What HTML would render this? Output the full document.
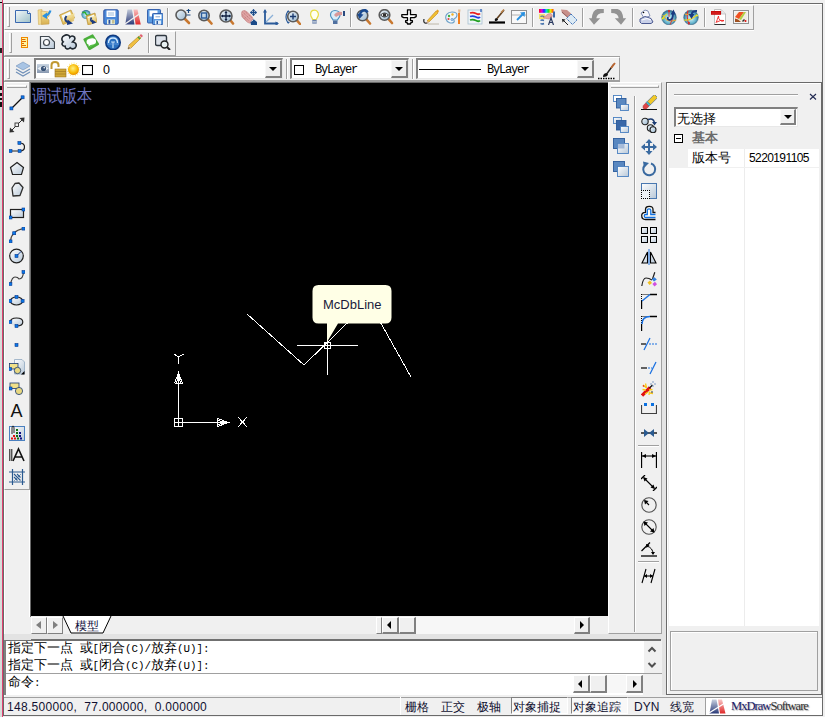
<!DOCTYPE html>
<html><head><meta charset="utf-8">
<style>
*{box-sizing:border-box;margin:0;padding:0}
html,body{width:825px;height:717px;overflow:hidden;background:#f0f0f0;font-family:"Liberation Sans",sans-serif;font-size:12px;color:#000}
.a{position:absolute}
.tb{position:absolute;background:#f0f0f0;border-top:1px solid #fff;border-left:1px solid #fff;border-right:1px solid #a0a0a0;border-bottom:1px solid #a0a0a0}
.gripv{position:absolute;width:3px;border-left:1px solid #fff;border-right:1px solid #a0a0a0;border-bottom:1px solid #a0a0a0}
.griph{position:absolute;height:3px;border-top:1px solid #fff;border-bottom:1px solid #a0a0a0;border-right:1px solid #a0a0a0}
.sepv{position:absolute;width:2px;border-left:1px solid #a0a0a0;border-right:1px solid #fff}
.seph{position:absolute;height:2px;border-top:1px solid #a0a0a0;border-bottom:1px solid #fff}
.ic{position:absolute;width:16px;height:16px}
.combo{position:absolute;background:#fff;border-top:2px solid #808080;border-left:2px solid #808080;border-right:1px solid #e8e8e8;border-bottom:1px solid #e8e8e8}
.ddb{position:absolute;background:#f0f0f0;border-top:1px solid #f8f8f8;border-left:1px solid #f8f8f8;border-right:2px solid #808080;border-bottom:2px solid #808080}
.ddb:after{content:"";position:absolute;left:50%;top:50%;margin-left:-4px;margin-top:-2px;border-left:4px solid transparent;border-right:4px solid transparent;border-top:4px solid #000}
.sb{position:absolute;background:#f0f0f0;border-top:1px solid #fff;border-left:1px solid #fff;border-right:1px solid #808080;border-bottom:1px solid #808080}
.m{font-family:"Liberation Mono",monospace;font-size:10.83px}
.cjk{font-family:"Liberation Sans",sans-serif}
</style></head><body>
<!-- left edge -->
<div class="a" style="left:0;top:0;width:2px;height:717px;background:#d8dcda"></div>
<div class="a" style="left:2px;top:0;width:1px;height:717px;background:#e04070"></div>
<!-- app frame -->

<div class="a" style="left:4px;top:4px;width:818px;height:1px;background:#fff"></div>
<div class="a" style="left:4px;top:4px;width:1px;height:711px;background:#fff"></div>

<!-- row separators -->
<div class="a" style="left:4px;top:29px;width:750px;height:1px;background:#a0a0a0"></div>
<div class="a" style="left:4px;top:30px;width:750px;height:1px;background:#fff"></div>
<div class="a" style="left:4px;top:56px;width:616px;height:1px;background:#a0a0a0"></div>
<div class="a" style="left:4px;top:57px;width:616px;height:1px;background:#fff"></div>
<div class="a" style="left:4px;top:81px;width:616px;height:1px;background:#a0a0a0"></div>

<!-- toolbar row1 -->
<div class="tb" style="left:4px;top:5px;width:750px;height:25px"></div>
<div class="gripv" style="left:7px;top:7px;height:20px"></div>
<!-- toolbar row2 -->
<div class="tb" style="left:4px;top:31px;width:172px;height:25px"></div>
<div class="gripv" style="left:9px;top:33px;height:20px"></div>
<!-- toolbar row3 -->
<div class="tb" style="left:4px;top:57px;width:616px;height:24px"></div>
<div class="gripv" style="left:7px;top:59px;height:20px"></div>

<!-- row1 separators -->
<div class="sepv" style="left:167px;top:8px;height:19px"></div>
<div class="sepv" style="left:350px;top:8px;height:19px"></div>
<div class="sepv" style="left:532px;top:8px;height:19px"></div>
<div class="sepv" style="left:582px;top:8px;height:19px"></div>
<div class="sepv" style="left:632px;top:8px;height:19px"></div>
<div class="sepv" style="left:704px;top:8px;height:19px"></div>
<div class="sepv" style="left:148px;top:33px;height:20px"></div>
<!-- layer combos -->
<div class="combo" style="left:34px;top:58px;width:249px;height:21px"></div>
<div class="ddb" style="left:265px;top:60px;width:17px;height:18px"></div>
<div class="a" style="left:103px;top:62px;font-size:12.5px;line-height:16px">0</div>
<div class="sepv" style="left:286px;top:59px;height:20px"></div>
<div class="combo" style="left:290px;top:58px;width:119px;height:21px"></div>
<div class="ddb" style="left:391px;top:60px;width:17px;height:18px"></div>
<div class="a" style="left:315px;top:62px;font-family:'Liberation Mono',monospace;font-size:12px;line-height:16px;letter-spacing:-1.2px">ByLayer</div>
<div class="sepv" style="left:412px;top:59px;height:20px"></div>
<div class="combo" style="left:416px;top:58px;width:178px;height:21px"></div>
<div class="ddb" style="left:577px;top:60px;width:17px;height:18px"></div>
<div class="a" style="left:419px;top:69px;width:62px;height:1px;background:#000"></div>
<div class="a" style="left:487px;top:62px;font-family:'Liberation Mono',monospace;font-size:12px;line-height:16px;letter-spacing:-1.2px">ByLayer</div>
<!-- left vertical toolbar -->
<div class="tb" style="left:4px;top:82px;width:26px;height:408px"></div>
<div class="griph" style="left:7px;top:85px;width:20px"></div>

<!-- canvas -->
<div class="a" style="left:29px;top:81px;width:580px;height:536px;border-left:1px solid #a0a0a0;border-top:1px solid #a0a0a0"></div><div class="a" style="left:30px;top:82px;width:579px;height:535px;border-left:1px solid #696969;border-top:1px solid #696969"></div><div class="a" style="left:29px;top:490px;width:1px;height:127px;background:#fff"></div>
<div class="a" id="cv" style="left:31px;top:83px;width:577px;height:533px;background:#000;overflow:hidden">
<svg width="577" height="533" style="position:absolute;left:0;top:0" shape-rendering="crispEdges">
<g transform="translate(-31,-83)" stroke="#fff" stroke-width="1" fill="none">
<polyline points="247,314 304,365 369,302 411,377"/>
<line x1="297" y1="345.5" x2="358" y2="345.5"/>
<line x1="327.5" y1="315" x2="327.5" y2="375"/>
<rect x="324.5" y="342.5" width="6" height="6"/>
<rect x="174.5" y="418.5" width="8" height="8"/>
<line x1="178.5" y1="418" x2="178.5" y2="427"/>
<line x1="174" y1="422.5" x2="183" y2="422.5"/>
<line x1="178.5" y1="418" x2="178.5" y2="374"/>
<line x1="183" y1="422.5" x2="227" y2="422.5"/>
<polyline points="174.5,383.5 178.5,372.5 182.5,383.5 174.5,383.5"/>
<polyline points="176.5,383 178.5,375 180.5,383"/>
<polyline points="217.5,418.5 228.5,422.5 217.5,426.5 217.5,418.5"/>
<polyline points="218,420.5 226,422.5 218,424.5"/>
<line x1="238" y1="417" x2="247" y2="427"/>
<line x1="247" y1="417" x2="238" y2="427"/>
<polyline points="174,354 178.5,357 184,354"/>
<line x1="178.5" y1="357" x2="178.5" y2="364"/>
</g>
<g transform="translate(-31,-83)">
<path d="M318.5,285 H385.5 Q391.5,285 391.5,291 V317.5 Q391.5,323.5 385.5,323.5 H338 L327,342 L327,323.5 H318.5 Q312.5,323.5 312.5,317.5 V291 Q312.5,285 318.5,285 Z" fill="#ffffe6" stroke="none" shape-rendering="geometricPrecision"/>
</g>
</svg>
<div class="a" style="left:292px;top:214px;font-size:13px;color:#1a1a3a;letter-spacing:0px">McDbLine</div>
<div class="a" style="left:1px;top:2px;font-size:15px;line-height:17px;color:#6e74c0;font-weight:200;transform:scaleY(1.18);transform-origin:0 0">调试版本</div>
</div>

<!-- tab/scroll bar -->
<div class="a" style="left:31px;top:616px;width:577px;height:18px;background:#f0f0f0"></div>
<div class="sb" style="left:31px;top:617px;width:16px;height:17px"></div>
<div class="sb" style="left:47px;top:617px;width:16px;height:17px"></div>
<div class="a" style="left:36px;top:621px;width:0;height:0;border-top:4px solid transparent;border-bottom:4px solid transparent;border-right:5px solid #808080"></div>
<div class="a" style="left:53px;top:621px;width:0;height:0;border-top:4px solid transparent;border-bottom:4px solid transparent;border-left:5px solid #808080"></div>
<svg class="a" style="left:62px;top:616px" width="52" height="18"><path d="M1,0 L9,17 H41 L49,0" fill="#fff" stroke="#000" stroke-width="1"/></svg>
<div class="a" style="left:75px;top:618px;font-size:12px;color:#101040">模型</div>
<div class="sb" style="left:376px;top:617px;width:6px;height:17px"></div>
<div class="sb" style="left:382px;top:617px;width:17px;height:17px;border-right:2px solid #808080;border-bottom:2px solid #808080"></div>
<div class="a" style="left:387px;top:621px;width:0;height:0;border-top:4px solid transparent;border-bottom:4px solid transparent;border-right:4px solid #000"></div>
<div class="sb" style="left:399px;top:617px;width:17px;height:17px;border-right:2px solid #808080;border-bottom:2px solid #808080"></div>
<div class="a" style="left:416px;top:617px;width:158px;height:17px;background:#f7f7f7"></div>
<div class="sb" style="left:574px;top:617px;width:16px;height:17px;border-right:2px solid #808080;border-bottom:2px solid #808080"></div>
<div class="a" style="left:580px;top:621px;width:0;height:0;border-top:4px solid transparent;border-bottom:4px solid transparent;border-left:4px solid #000"></div>
<div class="a" style="left:31px;top:634px;width:631px;height:6px;background:#e3e3e3"></div>

<!-- right toolbar -->
<div class="tb" style="left:608px;top:82px;width:54px;height:552px"></div>
<div class="griph" style="left:611px;top:85px;width:48px"></div>
<div class="sepv" style="left:634px;top:96px;height:536px"></div>
<!-- right toolbar seps -->
<div class="seph" style="left:638px;top:445px;width:21px"></div>
<div class="seph" style="left:638px;top:561px;width:21px"></div>


<!-- splitter -->
<div class="a" style="left:662px;top:82px;width:4px;height:613px;background:#e3e3e3"></div>

<!-- right panel -->
<div class="a" style="left:666px;top:82px;width:156px;height:613px;border:1px solid #6a6a6a;background:#f0f0f0"></div>
<div class="a" style="left:667px;top:83px;width:1px;height:611px;background:#fff"></div>
<div class="a" style="left:667px;top:83px;width:154px;height:1px;background:#fff"></div>
<div class="a" style="left:674px;top:94px;width:124px;height:2px;border-top:1px solid #a0a0a0;border-bottom:1px solid #fff"></div>
<svg class="a" style="left:809px;top:93px" width="8" height="7"><path d="M1,1 L7,6.5 M7,1 L1,6.5" stroke="#202850" stroke-width="1.1"/></svg>
<div class="combo" style="left:674px;top:107px;width:124px;height:20px"></div>
<div class="ddb" style="left:780px;top:109px;width:16px;height:16px"></div>
<div class="a cjk" style="left:677px;top:110.5px;font-size:13px;line-height:16px">无选择</div>
<div class="a" style="left:674px;top:134px;width:9px;height:9px;border:1px solid #000;background:#fff"></div>
<div class="a" style="left:676px;top:138px;width:5px;height:1px;background:#000"></div>
<div class="a cjk" style="left:692px;top:130px;font-size:13px;line-height:16px;color:#6a6a6a;font-weight:bold">基本</div>
<div class="a" style="left:688px;top:149px;width:131px;height:18px;background:#fff"></div>
<div class="a" style="left:669px;top:168px;width:150px;height:458px;background:#fff"></div>
<div class="a" style="left:744px;top:149px;width:1px;height:477px;background:#ececec"></div>
<div class="a" style="left:669px;top:167px;width:150px;height:1px;background:#f0f0f0"></div>
<div class="a cjk" style="left:692px;top:150px;font-size:13px;line-height:16px">版本号</div>
<div class="a" style="left:749px;top:150px;font-size:12px;line-height:16px;letter-spacing:-0.6px">5220191105</div>
<div class="a" style="left:670px;top:631px;width:148px;height:60px;border:1px solid #a0a0a0;box-shadow:inset 1px 1px 0 #fff"></div>

<!-- command area -->
<div class="a" style="left:4px;top:639px;width:657px;height:56px;border-top:2px solid #707070;border-left:2px solid #808080;background:#fff"></div>
<div class="a" style="left:4px;top:634px;width:27px;height:6px;background:#e3e3e3"></div>
<div class="a cjk" style="left:8px;top:640px;font-size:13px;line-height:16px;white-space:pre">指定下一点<span class="m"> </span>或<span class="m">[</span>闭合<span class="m">(C)/</span>放弃<span class="m">(U)]:</span><br>指定下一点<span class="m"> </span>或<span class="m">[</span>闭合<span class="m">(C)/</span>放弃<span class="m">(U)]:</span></div>
<div class="a" style="left:6px;top:673px;width:656px;height:1px;background:#a0a0a0"></div>
<div class="a cjk" style="left:8px;top:674px;font-size:13px;line-height:16px;white-space:pre">命令<span class="m">:</span></div>
<div class="a" style="left:644px;top:641px;width:18px;height:32px;background:#f0f0f0"></div>
<svg class="a" style="left:644px;top:641px" width="18" height="32"><path d="M4.5,10.5 L8,7 L11.5,10.5 M4.5,22 L8,25.5 L11.5,22" fill="none" stroke="#505050" stroke-width="2"/></svg>
<div class="sb" style="left:573px;top:675px;width:17px;height:18px;border-right:2px solid #808080;border-bottom:2px solid #808080"></div>
<div class="a" style="left:578px;top:680px;width:0;height:0;border-top:4px solid transparent;border-bottom:4px solid transparent;border-right:4px solid #000"></div>
<div class="sb" style="left:590px;top:675px;width:17px;height:18px;border-right:2px solid #808080;border-bottom:2px solid #808080"></div>
<div class="a" style="left:607px;top:675px;width:19px;height:18px;background:#f7f7f7"></div>
<div class="sb" style="left:626px;top:675px;width:17px;height:18px;border-right:2px solid #808080;border-bottom:2px solid #808080"></div>
<div class="a" style="left:633px;top:680px;width:0;height:0;border-top:4px solid transparent;border-bottom:4px solid transparent;border-left:4px solid #000"></div>
<div class="a" style="left:643px;top:674px;width:19px;height:21px;background:#f0f0f0"></div>

<!-- status bar -->
<div class="a" style="left:4px;top:697px;width:818px;height:19px;border-top:1px solid #a0a0a0;border-bottom:1px solid #fff;background:#f0f0f0"></div>
<div class="a" style="left:400px;top:697px;width:1px;height:18px;background:#fff"></div>
<div class="a" style="left:7px;top:699px;font-size:12px;line-height:16px;color:#101030;white-space:pre;letter-spacing:0.3px">148.500000,  77.000000,  0.000000</div>
<div class="a cjk" style="left:405px;top:699px;font-size:12px;line-height:16px;color:#101030">栅格</div>
<div class="a cjk" style="left:441px;top:699px;font-size:12px;line-height:16px;color:#101030">正交</div>
<div class="a cjk" style="left:477px;top:699px;font-size:12px;line-height:16px;color:#101030">极轴</div>
<div class="a" style="left:511px;top:697px;width:57px;height:17px;border-top:1px solid #808080;border-left:1px solid #808080;border-right:1px solid #fff;border-bottom:1px solid #fff;background:#f8f8f8"></div>
<div class="a cjk" style="left:513px;top:699px;font-size:12px;line-height:16px;color:#101030">对象捕捉</div>
<div class="a" style="left:571px;top:697px;width:57px;height:17px;border-top:1px solid #808080;border-left:1px solid #808080;border-right:1px solid #fff;border-bottom:1px solid #fff;background:#f8f8f8"></div>
<div class="a cjk" style="left:573px;top:699px;font-size:12px;line-height:16px;color:#101030">对象追踪</div>
<div class="a" style="left:634px;top:699px;font-size:12px;line-height:16px;color:#101030">DYN</div>
<div class="a cjk" style="left:670px;top:699px;font-size:12px;line-height:16px;color:#101030">线宽</div>
<div class="a" style="left:705px;top:697px;width:117px;height:18px;border-top:1px solid #909090;border-left:1px solid #a0a0a0;background:#fff"></div>
<svg class="a" style="left:709px;top:699px" width="18" height="15"><defs><linearGradient id="sL" x1="0" y1="0" x2="0" y2="1"><stop offset="0" stop-color="#c8d0e0"/><stop offset="1" stop-color="#2a3a78"/></linearGradient><linearGradient id="sR" x1="0" y1="0" x2="0" y2="1"><stop offset="0" stop-color="#f8c8c8"/><stop offset="1" stop-color="#e02828"/></linearGradient></defs><path d="M3,0.5 H7.5 L10,14.5 H0.5 Z" fill="url(#sL)"/><path d="M9,0.5 H13 L16.5,14.5 H11 Z" fill="url(#sR)"/><path d="M0,14 L16,4" stroke="#fff" stroke-width="1.4"/></svg>
<div class="a" style="left:731px;top:699px;font-family:'Liberation Serif',serif;font-size:12.5px;line-height:14px;letter-spacing:-0.95px;font-weight:normal;text-shadow:1px 1px 1px #aaa"><span style="color:#20206a">MxDraw</span><span style="color:#333">Software</span></div>
<svg width="0" height="0" style="position:absolute"><defs>
<linearGradient id="gPage" x1="0" y1="0" x2="1" y2="1"><stop offset="0" stop-color="#f4f8fa"/><stop offset="1" stop-color="#9cc0c8"/></linearGradient>
<linearGradient id="gFold" x1="0" y1="0" x2="0" y2="1"><stop offset="0" stop-color="#f8e6a0"/><stop offset="1" stop-color="#d8b050"/></linearGradient>
<linearGradient id="gLens" x1="0" y1="0" x2="1" y2="1"><stop offset="0" stop-color="#f0f6fa"/><stop offset="1" stop-color="#9ab8d0"/></linearGradient>
<linearGradient id="gGrey" x1="0" y1="0" x2="1" y2="1"><stop offset="0" stop-color="#ffffff"/><stop offset="1" stop-color="#b8c8d8"/></linearGradient>
<linearGradient id="gBlue" x1="0" y1="0" x2="1" y2="1"><stop offset="0" stop-color="#80a8d8"/><stop offset="1" stop-color="#3a6aa8"/></linearGradient>
<linearGradient id="gMxL" x1="0" y1="0" x2="0" y2="1"><stop offset="0" stop-color="#c0c8d8"/><stop offset="1" stop-color="#2a3a78"/></linearGradient>
<linearGradient id="gMxR" x1="0" y1="0" x2="0" y2="1"><stop offset="0" stop-color="#f8c0c0"/><stop offset="1" stop-color="#e02828"/></linearGradient>
<radialGradient id="gGlobe" cx="0.5" cy="0.55" r="0.6"><stop offset="0" stop-color="#e0f6fa"/><stop offset="0.55" stop-color="#6ab8d0"/><stop offset="1" stop-color="#1a5078"/></radialGradient>
<linearGradient id="gRain" x1="0" y1="0" x2="1" y2="0"><stop offset="0" stop-color="#ff0020"/><stop offset="0.2" stop-color="#e000e0"/><stop offset="0.35" stop-color="#2020ff"/><stop offset="0.5" stop-color="#00e0e0"/><stop offset="0.65" stop-color="#20e020"/><stop offset="0.8" stop-color="#f0f000"/><stop offset="1" stop-color="#ff3000"/></linearGradient>
<radialGradient id="gSun" cx="0.45" cy="0.4" r="0.6"><stop offset="0" stop-color="#fff080"/><stop offset="0.7" stop-color="#f8b800"/><stop offset="1" stop-color="#e89000"/></radialGradient>
</defs></svg>
<svg class="a" style="left:15px;top:9px" width="16" height="16" viewBox="0 0 16 16"><path d="M0.5,1.5 H12.5 L15.5,4.5 V13.5 H0.5 Z" fill="url(#gPage)" stroke="#3a68b0" stroke-width="1"/><path d="M12.5,1.5 V4.5 H15.5" fill="#fff" stroke="#3a68b0"/></svg>
<svg class="a" style="left:37px;top:9px" width="16" height="16" viewBox="0 0 16 16"><path d="M1,1 L5,0.5 L5.5,15 L1.5,15.5 Z" fill="#f4dc90" stroke="#d0b060" stroke-width="0.6"/><path d="M4,2 L12,3 L12,7 L10,9 L12,11 V15 L4.5,15.5 Z" fill="url(#gFold)" stroke="#c8a050" stroke-width="0.6"/><path d="M8.5,6.5 Q12,6 13.5,1.5" stroke="#2a90e0" stroke-width="2.2" fill="none"/><path d="M5,7 L10,3.5 L10,10 Z" fill="#2a90e0"/></svg>
<svg class="a" style="left:59px;top:9px" width="16" height="16" viewBox="0 0 16 16"><path d="M0.5,6 L12,1 L15.5,9 L4,15.5 Z" fill="#e8c460" stroke="#b89038" stroke-width="0.7"/><path d="M2.5,6.5 L11,2.5 L13,8 L5,13 Z" fill="#f4fbff"/><path d="M5,8 L15.5,4 L15,12 L5,15.5 Z" fill="url(#gFold)" opacity="0.9"/><path d="M7.5,7 Q4.5,11 9,13.5" stroke="#1a3a80" stroke-width="2" fill="none"/><path d="M8.5,10.5 L14,14.5 L8,16 Z" fill="#1a3a80"/></svg>
<svg class="a" style="left:81px;top:9px" width="16" height="16" viewBox="0 0 16 16"><circle cx="5" cy="5.5" r="4.6" fill="url(#gGlobe)"/><path d="M1.5,4 Q4,2 5,5 Q6,7 9,6" stroke="#30b030" stroke-width="1.6" fill="none"/><path d="M5,7 L14,4 L16,13 L7,16 Z" fill="#e0b850" stroke="#b08830" stroke-width="0.6"/><path d="M6.5,8 L13,5.5 L14.5,11 L8,14 Z" fill="#f4fbff"/><path d="M7,9 L15,6.5 L15.5,13 L8,16 Z" fill="url(#gFold)" opacity="0.85"/><path d="M10.5,8.5 Q8.5,12 12,13" stroke="#1a3a80" stroke-width="1.6" fill="none"/><path d="M11,10.5 L15.5,13.5 L11,15 Z" fill="#1a3a80"/></svg>
<svg class="a" style="left:103px;top:9px" width="16" height="16" viewBox="0 0 16 16"><rect x="0.8" y="0.8" width="14.4" height="14.4" rx="1.2" fill="#4a88d8" stroke="#2a50a0" stroke-width="1"/><rect x="3.5" y="1.5" width="9" height="6.5" fill="#fff"/><path d="M5,4 H11 M5,6 H11" stroke="#80a8d0" stroke-width="0.8"/><rect x="4" y="10.5" width="8" height="4.7" fill="#e8f0e0"/><rect x="5.5" y="11" width="1.8" height="3.8" fill="#2a50a0"/><rect x="9" y="11" width="2.5" height="3.5" fill="#c8c090"/></svg>
<svg class="a" style="left:125px;top:9px" width="16" height="16" viewBox="0 0 16 16"><path d="M2.5,0.5 H7 L9.5,15.5 H0.3 Z" fill="url(#gMxL)"/><path d="M8.5,0.5 H12.5 L15.8,15.5 H10.6 Z" fill="url(#gMxR)"/><path d="M0,15 L15,4.5" stroke="#f0f0f0" stroke-width="1.4"/></svg>
<svg class="a" style="left:147px;top:9px" width="16" height="16" viewBox="0 0 16 16"><rect x="0.5" y="0.5" width="13" height="13.5" rx="0.8" fill="#5a9ae0" stroke="#2a58a8" stroke-width="0.9"/><rect x="2.5" y="1.5" width="8" height="6" fill="#fff"/><rect x="5.5" y="4.5" width="10.5" height="11" rx="0.8" fill="#5a9ae0" stroke="#2a58a8" stroke-width="0.9"/><rect x="7" y="5.5" width="7.5" height="4.5" fill="#fff"/><path d="M8.5,7.8 H13" stroke="#6a90c0" stroke-width="0.8"/><rect x="8" y="11.5" width="6" height="4" fill="#e0ecf8"/><rect x="9.5" y="12" width="1.5" height="3" fill="#2a58a0"/></svg>
<svg class="a" style="left:175px;top:9px" width="16" height="16" viewBox="0 0 16 16"><path d="M9.5,9.5 L14,14" stroke="#c87830" stroke-width="2.6" stroke-linecap="round"/><circle cx="6" cy="6" r="5" fill="url(#gLens)" stroke="#5a5a5a" stroke-width="1.6"/><path d="M11.5,1.5 H15.5 M13.5,0 V4 M11.5,6 H15.5" stroke="#1a4a80" stroke-width="1.2"/></svg>
<svg class="a" style="left:197px;top:9px" width="16" height="16" viewBox="0 0 16 16"><path d="M10.6,10.1 L14.5,14.5" stroke="#c87830" stroke-width="2.6" stroke-linecap="round"/><circle cx="7" cy="6.5" r="5.2" fill="url(#gLens)" stroke="#5a5a5a" stroke-width="1.6"/><rect x="4.5" y="4" width="5" height="5" fill="none" stroke="#2a5a9a" stroke-width="1.4"/></svg>
<svg class="a" style="left:219px;top:9px" width="16" height="16" viewBox="0 0 16 16"><path d="M11.2,11.2 L14,14.5" stroke="#c87830" stroke-width="2.6" stroke-linecap="round"/><circle cx="7" cy="7" r="6" fill="url(#gLens)" stroke="#5a5a5a" stroke-width="1.6"/><path d="M7,2.5 V11.5 M2.5,7 H11.5" stroke="#102040" stroke-width="1.3"/><path d="M7,2 L5.5,4 H8.5 Z M7,12 L5.5,10 H8.5 Z M2,7 L4,5.5 V8.5 Z M12,7 L10,5.5 V8.5 Z" fill="#102040"/></svg>
<svg class="a" style="left:241px;top:9px" width="16" height="16" viewBox="0 0 16 16"><path d="M0.5,4 Q0.5,1.5 3,1.5 Q4.5,1.5 6,2.8 L10.5,7 Q12.8,9.2 12,11.8 L10.5,13.8 Q8,14.8 6,13 L1.2,8 Q0.3,6 0.5,4 Z" fill="#e0a4a4" stroke="#c08080" stroke-width="0.5"/><path d="M1.5,3 L9,10 M1,5.5 L7.5,11.5 M3.5,2 L10.5,8.5 M1.2,7.5 L5.5,12" stroke="#b06c6c" stroke-width="0.8" stroke-dasharray="1.2 0.9"/><path d="M9.5,13 L12.5,10 L16,13 V16 H10 Z" fill="#1a4a88"/><path d="M10.5,12.5 L12.5,10.5" stroke="#f0f0f0" stroke-width="0.8"/><path d="M12.5,0.5 V6.5 M9.5,3.5 H15.5" stroke="#1a4a88" stroke-width="1.3"/><path d="M12.5,0 L10.8,2 H14.2 Z M12.5,7 L10.8,5 H14.2 Z M9,3.5 L11,1.8 V5.2 Z M16,3.5 L14,1.8 V5.2 Z" fill="#1a4a88"/></svg>
<svg class="a" style="left:263px;top:9px" width="16" height="16" viewBox="0 0 16 16"><path d="M2,1.5 V14.5 H15" stroke="#2a5a9a" stroke-width="1.8" fill="none"/><path d="M2,0 L0,3.5 H4 Z M16,14.5 L12.5,12.5 V16.5 Z" fill="#2a5a9a"/><path d="M3,13 L10,6" stroke="#8ab0d8" stroke-width="1.2"/></svg>
<svg class="a" style="left:285px;top:9px" width="16" height="16" viewBox="0 0 16 16"><path d="M3,2 Q-1,8 3,14" stroke="#2a5a9a" stroke-width="1.2" fill="none"/><path d="M3,1 L5,3 L2.5,3.5 Z M3,15 L5,13 L2.5,12.5 Z" fill="#2a5a9a"/><path d="M11.7,11.2 L15,15" stroke="#c87830" stroke-width="2.6" stroke-linecap="round"/><circle cx="8" cy="7.5" r="5.3" fill="url(#gLens)" stroke="#5a5a5a" stroke-width="1.6"/><path d="M8,4.5 V10.5 M5,7.5 H11" stroke="#1a3a70" stroke-width="1.4"/></svg>
<svg class="a" style="left:307px;top:9px" width="16" height="16" viewBox="0 0 16 16"><path d="M7.5,1.2 C4.8,1.2 3.6,3.3 3.6,5.4 C3.6,7.8 5.3,8.8 5.6,10.5 H9.4 C9.7,8.8 11.4,7.8 11.4,5.4 C11.4,3.3 10.2,1.2 7.5,1.2 Z" fill="#fffff0" stroke="#e8dc40" stroke-width="1.2"/><rect x="5.3" y="10.8" width="4.4" height="4" rx="0.6" fill="#6a80a8"/><path d="M5.5,12.5 H9.5 M5.5,13.8 H9.5" stroke="#e0e8f0" stroke-width="0.6"/></svg>
<svg class="a" style="left:329px;top:9px" width="16" height="16" viewBox="0 0 16 16"><path d="M6,1.5 C3,1.5 1.5,4 1.5,6 C1.5,8.5 3.5,9.5 4,11 H8.5 C9,9.5 11,8.5 11,6 C11,4 9.5,1.5 6,1.5 Z" fill="#d8ecf8" stroke="#4a90c0" stroke-width="1.2"/><rect x="4" y="11.5" width="4.5" height="3.5" fill="#5070a0"/><path d="M5,6 Q8,2 13,3 L13,6 Q9,6 7,8 Z" fill="#d89898"/><rect x="14" y="2" width="2" height="5" fill="#2a4a80"/></svg>
<svg class="a" style="left:356px;top:9px" width="16" height="16" viewBox="0 0 16 16"><path d="M10.2,10.2 L14,14.5" stroke="#c87830" stroke-width="2.6" stroke-linecap="round"/><circle cx="6.5" cy="6.5" r="5.3" fill="url(#gLens)" stroke="#5a5a5a" stroke-width="1.6"/><path d="M11.5,3.5 Q10,0 6,2 Q4,3.5 4,6" stroke="#1a4a90" stroke-width="2.6" fill="none"/><path d="M1,4.5 L3.5,10 L7.5,5.5 Z" fill="#1a4a90"/></svg>
<svg class="a" style="left:378px;top:9px" width="16" height="16" viewBox="0 0 16 16"><path d="M10.2,9.7 L14,14" stroke="#c87830" stroke-width="2.6" stroke-linecap="round"/><circle cx="6.5" cy="6" r="5.3" fill="url(#gLens)" stroke="#5a5a5a" stroke-width="1.6"/><path d="M2.5,6 Q6.5,2 10.5,6 Q6.5,10 2.5,6 Z" fill="#fff" stroke="#303030" stroke-width="1"/><circle cx="6.5" cy="6" r="1.8" fill="#303030"/></svg>
<svg class="a" style="left:401px;top:9px" width="16" height="16" viewBox="0 0 16 16"><path d="M6.5,0.8 H9.5 V5.7 H15.2 V7.6 L13.3,8.6 H9.5 V11.7 H11.4 V13.2 L10,13.8 H9.5 V15 H6.5 V13.8 H6 L4.6,13.2 V11.7 H6.5 V8.6 H2.7 L0.8,7.6 V5.7 H6.5 Z" fill="#fff" stroke="#000" stroke-width="1.3" stroke-linejoin="round"/></svg>
<svg class="a" style="left:423px;top:9px" width="16" height="16" viewBox="0 0 16 16"><path d="M1,10 Q0,15 4,14 L5,13" stroke="#202020" stroke-width="1.2" fill="none"/><path d="M4,12 L13,2 L15,4 L6,13 Z" fill="#f0c030" stroke="#c08020" stroke-width="0.6"/><path d="M4,12 L6,13 L3.5,14.5 Z" fill="#e8b890"/><path d="M13,2 L14.5,0.5 L16,2 L15,4 Z" fill="#e8a020"/><path d="M5,15 H16" stroke="#b0a898" stroke-width="0.8"/></svg>
<svg class="a" style="left:445px;top:9px" width="16" height="16" viewBox="0 0 16 16"><path d="M7,3 C2,3 0,7 1,10 C2,14 7,15 9,13 C10,12 8,11 9,10 C11,9 12,8 12,6 C12,4 10,3 7,3 Z" fill="#f0f6fa" stroke="#6aa0c8" stroke-width="1.1"/><circle cx="4" cy="7" r="1.2" fill="#40b040"/><circle cx="7.5" cy="5.5" r="1.2" fill="#f0b020"/><circle cx="3.5" cy="10" r="1.1" fill="#e04040"/><circle cx="7" cy="10.5" r="1" fill="none" stroke="#4080c0" stroke-width="0.8"/><path d="M14,4 V15" stroke="#f08020" stroke-width="2"/><path d="M13,0.5 L15.5,0.5 L15,4 L13.5,4 Z" fill="#e0b890"/></svg>
<svg class="a" style="left:467px;top:9px" width="16" height="16" viewBox="0 0 16 16"><rect x="1" y="1" width="14" height="14" fill="#eef4f8" stroke="#a8c0d0" stroke-width="0.8"/><path d="M3,4 Q6,3 9,4.5 T13,4.5" stroke="#e82020" stroke-width="1.8" fill="none"/><path d="M3,7.5 Q6,6.5 9,8 T13,8" stroke="#2040e0" stroke-width="1.8" fill="none"/><path d="M3,11 Q6,10 9,11.5 T13,11.5" stroke="#20a020" stroke-width="1.8" fill="none"/><path d="M14,0 V3" stroke="#4070c0" stroke-width="1.5"/></svg>
<svg class="a" style="left:489px;top:9px" width="16" height="16" viewBox="0 0 16 16"><path d="M0,13.5 H16" stroke="#000" stroke-width="2.2"/><path d="M6,12 Q5,9 8,9 L9,10 Q9,12 6,12 Z" fill="#101010"/><path d="M8,9.5 L15,1" stroke="#604020" stroke-width="1.6"/><path d="M12,3.5 L15,0.5" stroke="#c08850" stroke-width="1.4"/></svg>
<svg class="a" style="left:511px;top:9px" width="16" height="16" viewBox="0 0 16 16"><rect x="0.5" y="1.5" width="15" height="13" fill="#f8f8f8" stroke="#909090" stroke-width="1"/><path d="M1,6 H15" stroke="#a0a0a0" stroke-width="0.8"/><path d="M6,11 L13,4" stroke="#2890e0" stroke-width="1.8"/><path d="M14,3 L9,3.5 L13.5,8 Z" fill="#2890e0"/></svg>
<svg class="a" style="left:539px;top:9px" width="16" height="16" viewBox="0 0 16 16"><rect x="0" y="0" width="14.5" height="3.8" fill="url(#gRain)"/><rect x="0" y="5" width="6" height="5" fill="#f0e070"/><path d="M1.5,7.5 Q3,6.5 5,7.5" stroke="#3a6aa8" stroke-width="1.2" fill="none"/><path d="M4,8.5 Q6,7.5 9,5 L12,4.5 Q14,6 13,8 L10,10 L7,9.5 Z" fill="#e8a8a0" stroke="#b87070" stroke-width="0.5"/><path d="M1.5,11.5 Q3,10.5 5,11.5 M1.5,14.5 Q3,15.5 5,14.5" stroke="#3a6aa8" stroke-width="1.4" fill="none"/><path d="M9.5,16 L12,9 L14.5,16 M10.5,13.5 H13.5" stroke="#2a3a60" stroke-width="1.2" fill="none"/><rect x="14" y="2.5" width="2" height="6" fill="#3a6aa8"/></svg>
<svg class="a" style="left:561px;top:9px" width="16" height="16" viewBox="0 0 16 16"><path d="M0,0.5 L6,1 L10,4.5 L10.5,9 L7,9 L1,4 Z" fill="#c8908a"/><path d="M1,3 L7,8.5" stroke="#8a5a5a" stroke-width="0.9"/><path d="M10,5 L16,11 L11.5,15.5 L5.5,9.5 Z" fill="#dceaf4" stroke="#3a70b8" stroke-width="1" stroke-dasharray="1.5 0.7"/><path d="M1.5,10.5 L7,16" stroke="#202020" stroke-width="1"/><path d="M1,10 L4.5,10.5 L1.5,13.5 Z" fill="#202020"/></svg>
<svg class="a" style="left:588px;top:9px" width="17" height="16" viewBox="0 0 17 16"><path d="M15.8,0 H9.5 Q4.5,1 3.8,9.3 H0.8 L6,15.7 L12.2,9.3 H8.3 Q8.8,4 15.8,4 Z" fill="#939393"/></svg>
<svg class="a" style="left:610px;top:9px" width="17" height="16" viewBox="0 0 17 16"><path d="M1.2,0 H7.5 Q12.5,1 13.2,9.3 H16.2 L11,15.7 L4.8,9.3 H8.7 Q8.2,4 1.2,4 Z" fill="#939393"/></svg>
<svg class="a" style="left:638px;top:9px" width="16" height="16" viewBox="0 0 16 16"><path d="M3,4 L7,1 L10,2 L12,7 L6,9 Z" fill="#f8f8fc" stroke="#6a78a8" stroke-width="0.8"/><circle cx="5.5" cy="3.5" r="0.8" fill="#000"/><path d="M2,10 L7,7.5 L13,9.5 L15,13 L13,14.5 H3.5 L2,13 Z" fill="#c8d0e8" stroke="#4a5890" stroke-width="1"/><path d="M4,11 L9,9.5 L13,11" stroke="#f8f8ff" stroke-width="1.2" fill="none"/></svg>
<svg class="a" style="left:661px;top:9px" width="16" height="16" viewBox="0 0 16 16"><circle cx="8" cy="8.5" r="7.3" fill="url(#gGlobe)" stroke="#2a5a7a" stroke-width="0.5"/><path d="M1.5,6 Q5,10 6,11 Q10,13 15,11" stroke="#f0a830" stroke-width="1.1" fill="none"/><path d="M1.5,9.5 Q4,6 6,5" stroke="#e8e020" stroke-width="1.1" fill="none"/><path d="M8,2 Q8,6 8,8 M12,9 L9,15.5" stroke="#e03030" stroke-width="0.9" fill="none"/><circle cx="8" cy="2" r="1" fill="#e02020"/><circle cx="1.8" cy="9.5" r="0.9" fill="#f0f000"/><path d="M7,8 Q6,11 9,11 Q12,10 12,5" stroke="#1a3a80" stroke-width="1.8" fill="none"/><path d="M9.5,5.5 L12.5,0.5 L14.8,5.5 Z" fill="#1a3a80"/></svg>
<svg class="a" style="left:683px;top:9px" width="16" height="16" viewBox="0 0 16 16"><circle cx="8" cy="8.5" r="7.3" fill="url(#gGlobe)" stroke="#2a5a7a" stroke-width="0.5"/><path d="M5,1.5 Q3,8 6,15.5" stroke="#e03030" stroke-width="1.1" fill="none"/><path d="M1,11 Q7,12 14,6" stroke="#f0d020" stroke-width="1.1" fill="none"/><path d="M2,5 Q5,6 7,5" stroke="#f0a030" stroke-width="1.1" fill="none"/><circle cx="6" cy="14" r="1" fill="#e02020"/><circle cx="14" cy="6.5" r="1" fill="#f0f020"/><path d="M14,2 Q9,1.5 8.5,6" stroke="#1a3a80" stroke-width="2" fill="none"/><path d="M5.5,5 L11.5,5 L8.5,10 Z" fill="#1a3a80"/></svg>
<svg class="a" style="left:711px;top:9px" width="16" height="16" viewBox="0 0 16 16"><path d="M3.5,0.5 H10 L14.5,5 V15.5 H3.5 Z" fill="#fff" stroke="#b0b0b0" stroke-width="0.8"/><path d="M10,0.5 V5 H14.5" fill="#e8e8e8" stroke="#b0b0b0" stroke-width="0.6"/><path d="M3.5,15.5 H14.5" stroke="#303030" stroke-width="1"/><rect x="0" y="2" width="10" height="3.8" fill="#c80c0c"/><path d="M1,4 H9" stroke="#f04040" stroke-width="0.6"/><path d="M5,14 Q6.5,10 7.5,7 Q7,10 10,12 Q12.5,12.5 13,11.5 Q10,10.5 6,13" stroke="#f02020" stroke-width="0.9" fill="none"/></svg>
<svg class="a" style="left:733px;top:9px" width="16" height="16" viewBox="0 0 16 16"><rect x="0.5" y="1.5" width="15" height="13" fill="#f4f4f4" stroke="#909090" stroke-width="1"/><rect x="2" y="3" width="12" height="10" fill="#f0ece0"/><path d="M2,8 L6,3 H11 L6,10 Z" fill="#f05020"/><path d="M6,10 L11,3 H13 L8,11 Z" fill="#b0d040"/><path d="M2,9.5 Q5,9.5 8,13 H2 Z" fill="#a05020"/><path d="M9,12 L11,10 L12,11 L10,13 Z" fill="#303030"/><circle cx="12.5" cy="12" r="1" fill="#e01010"/></svg>
<svg class="a" style="left:17px;top:34px" width="16" height="16" viewBox="0 0 16 16"><rect x="4.5" y="3.5" width="6" height="10" fill="#fff6a0" stroke="#f08800" stroke-width="1"/><path d="M5,5.5 H8.5 M5,7.5 H9 M5,9.5 H7 M5,11.5 H9" stroke="#e06800" stroke-width="1"/></svg>
<svg class="a" style="left:39px;top:34px" width="16" height="16" viewBox="0 0 16 16"><path d="M1.5,2.5 H10 L15.5,8 V14.5 H1.5 Z" fill="url(#gGrey)" stroke="#404850" stroke-width="1.2"/><circle cx="7.5" cy="8.5" r="3" fill="#fff" stroke="#404850" stroke-width="1.2"/></svg>
<svg class="a" style="left:61px;top:34px" width="16" height="16" viewBox="0 0 16 16"><path d="M3,1.8 C5.5,0 8.5,1 8.8,3.2 C10.5,1 14.5,2 13.8,5.2 C13.5,6.8 12,7.2 11.5,8 C14,8 15.8,10 15,12.5 C14,15.2 10.8,15.5 9.2,13.8 C7.5,15.8 3.8,15.2 4.2,12.2 C1.2,12.5 0,9.5 2.2,7.8 C0,6 0.8,2.5 3,1.8 Z" fill="url(#gGrey)" stroke="#202830" stroke-width="1.6"/></svg>
<svg class="a" style="left:83px;top:34px" width="16" height="16" viewBox="0 0 16 16"><path d="M1.5,5.5 L9.5,1.5 L15,10 L6.5,15 Z" fill="#5cc44c" stroke="#4aae3a" stroke-width="2.2" stroke-linejoin="round"/><ellipse cx="8.3" cy="7.6" rx="4.8" ry="3.2" fill="#fff" transform="rotate(-8 8.3 7.6)"/><path d="M6,9.5 L5.5,12.5 L8.5,10.2 Z" fill="#fff"/></svg>
<svg class="a" style="left:105px;top:34px" width="16" height="16" viewBox="0 0 16 16"><circle cx="8" cy="8.5" r="7.2" fill="#2a70c0" stroke="#103a80" stroke-width="1.6"/><path d="M3.5,9 Q3.5,4 8,4 Q12.5,4 12.5,9" stroke="#d0e8ff" stroke-width="1.4" fill="none"/><path d="M8,8 V14 M6,8 H10" stroke="#c0dcf8" stroke-width="1.2"/><path d="M2,10 H14" stroke="#6aa0e0" stroke-width="0.8"/></svg>
<svg class="a" style="left:127px;top:34px" width="16" height="16" viewBox="0 0 16 16"><path d="M1,15 L2,11 L12,2 L14,4 L4,14 Z" fill="#f0c040" stroke="#b08020" stroke-width="0.6"/><path d="M1,15 L2,11 L4,14 Z" fill="#e8c8a0"/><path d="M1,15 L1.8,13 L2.8,14 Z" fill="#303030"/><path d="M11,3 L13,5" stroke="#40a040" stroke-width="1.5"/><path d="M12.5,1.5 L14,0 L16,2 L14.5,3.5 Z" fill="#e06070"/></svg>
<svg class="a" style="left:155px;top:34px" width="16" height="16" viewBox="0 0 16 16"><rect x="0.5" y="1.5" width="11" height="10" rx="1.5" fill="#dde2ea" stroke="#303840" stroke-width="1.4"/><path d="M11,12 L15,16" stroke="#202020" stroke-width="2"/><circle cx="9.5" cy="10.5" r="3.5" fill="#e8f0f0" stroke="#202020" stroke-width="1.4"/></svg>
<svg class="a" style="left:15px;top:61px" width="16" height="16" viewBox="0 0 16 16"><path d="M8,1 L15,5 L8,9 L1,5 Z" fill="#a8c4e4" stroke="#7090b8" stroke-width="0.6"/><path d="M1,8 L8,12 L15,8" stroke="#7090b8" stroke-width="1.2" fill="none"/><path d="M1,11 L8,15 L15,11" stroke="#7090b8" stroke-width="1.2" fill="none"/></svg>
<svg class="a" style="left:37px;top:63px" width="12" height="12" viewBox="0 0 12 12"><defs><linearGradient id="gEye" x1="0" y1="0" x2="0" y2="1"><stop offset="0" stop-color="#c8d4e0"/><stop offset="1" stop-color="#8898b0"/></linearGradient></defs><rect x="0" y="1" width="12" height="9" fill="url(#gEye)"/><path d="M0.5,5.5 Q6,0.5 11.5,5.5 Q6,10 0.5,5.5 Z" fill="#e8eef4"/><circle cx="6.5" cy="5.5" r="2.6" fill="#3a5478"/><circle cx="7.2" cy="4.8" r="0.8" fill="#fff"/></svg>
<svg class="a" style="left:50px;top:60px" width="17" height="18" viewBox="0 0 17 18"><path d="M1.5,9 V5 Q1.5,2 5,2 Q8.5,2 8.5,5 V7" stroke="#c09830" stroke-width="2" fill="none"/><rect x="5" y="9" width="11" height="8" fill="#d0a838" stroke="#987020" stroke-width="0.6"/><path d="M5,11.5 H16 M5,14 H16" stroke="#987020" stroke-width="0.6"/></svg>
<svg class="a" style="left:67px;top:62px" width="14" height="15" viewBox="0 0 14 15"><circle cx="6.5" cy="7.5" r="5.5" fill="url(#gSun)"/><circle cx="6.5" cy="7.5" r="6.5" fill="none" stroke="#f8d000" stroke-width="0.6" stroke-dasharray="1 1.5"/></svg>
<svg class="a" style="left:82px;top:65px" width="11" height="11" viewBox="0 0 11 11"><rect x="0.5" y="0.5" width="10" height="9" fill="#fff" stroke="#000" stroke-width="1.1"/></svg>
<svg class="a" style="left:294px;top:65px" width="10" height="10" viewBox="0 0 10 10"><rect x="0.5" y="0.5" width="9" height="9" fill="#fff" stroke="#000" stroke-width="1"/></svg>
<svg class="a" style="left:598px;top:60px" width="18" height="20" viewBox="0 0 18 20"><path d="M0,18.5 H17" stroke="#000" stroke-width="1.5" stroke-dasharray="1.5 1"/><path d="M5,17 Q5,13 9,13 L10,14 Q10,17 5,17 Z" fill="#101010"/><path d="M9,13.5 L16,4" stroke="#202020" stroke-width="1.4"/><path d="M13,8 L17,3" stroke="#c06830" stroke-width="1.8"/></svg>
<svg class="a" style="left:9px;top:95px" width="16" height="16" viewBox="0 0 16 16"><path d="M2.5,13.5 L13.5,2.5" stroke="#101010" stroke-width="1.3"/><rect x="0.8999999999999999" y="11.9" width="3" height="3" fill="#0a78e8" stroke="#0a3a90" stroke-width="0.6"/><rect x="12.1" y="0.7999999999999998" width="3" height="3" fill="#0a78e8" stroke="#0a3a90" stroke-width="0.6"/></svg>
<svg class="a" style="left:9px;top:117px" width="16" height="16" viewBox="0 0 16 16"><path d="M1.5,14.5 L14.5,1.5" stroke="#303030" stroke-width="1"/><path d="M0.5,15.5 L1,10.5 L5.5,15 Z M15.5,0.5 L15,5.5 L10.5,1 Z" fill="#303030"/><rect x="6" y="6" width="3.5" height="3.5" fill="#f0f0f0" stroke="#303030" stroke-width="0.9"/></svg>
<svg class="a" style="left:9px;top:139px" width="16" height="16" viewBox="0 0 16 16"><path d="M1.5,12 H10.5 M10.5,12 Q15.5,12 15.5,8 Q15.5,4 10.5,4" stroke="#202020" stroke-width="1.2" fill="none"/><rect x="0.0" y="10.5" width="3" height="3" fill="#0a78e8" stroke="#0a3a90" stroke-width="0.6"/><rect x="9.1" y="10.5" width="3" height="3" fill="#0a78e8" stroke="#0a3a90" stroke-width="0.6"/><rect x="8.9" y="2.5" width="3" height="3" fill="#0a78e8" stroke="#0a3a90" stroke-width="0.6"/></svg>
<svg class="a" style="left:9px;top:160.5px" width="16" height="16" viewBox="0 0 16 16"><path d="M8,1.5 L14.5,6.5 L12.5,13.5 H3.5 L1.5,6.5 Z" fill="url(#gGrey)" stroke="#202020" stroke-width="1.2"/></svg>
<svg class="a" style="left:9px;top:182px" width="16" height="16" viewBox="0 0 16 16"><path d="M6,1.5 L10,1 L14,5.5 L11,13.5 L4,14 L3,6 Z" fill="url(#gGrey)" stroke="#303030" stroke-width="1.3" stroke-linejoin="round"/></svg>
<svg class="a" style="left:9px;top:204.5px" width="16" height="16" viewBox="0 0 16 16"><rect x="1.5" y="4.5" width="13" height="8" fill="url(#gGrey)" stroke="#202020" stroke-width="1.2"/><rect x="0.0" y="11.0" width="3" height="3" fill="#0a78e8" stroke="#0a3a90" stroke-width="0.6"/><rect x="13.0" y="3.0" width="3" height="3" fill="#0a78e8" stroke="#0a3a90" stroke-width="0.6"/></svg>
<svg class="a" style="left:9px;top:227px" width="16" height="16" viewBox="0 0 16 16"><path d="M1.5,14.5 Q2,4 14.5,1.5" stroke="#504840" stroke-width="1.2" fill="none"/><rect x="0.0" y="12.9" width="3" height="3" fill="#0a78e8" stroke="#0a3a90" stroke-width="0.6"/><rect x="3.7" y="4.7" width="3" height="3" fill="#0a78e8" stroke="#0a3a90" stroke-width="0.6"/><rect x="13.0" y="0.10000000000000009" width="3" height="3" fill="#0a78e8" stroke="#0a3a90" stroke-width="0.6"/></svg>
<svg class="a" style="left:9px;top:248px" width="16" height="16" viewBox="0 0 16 16"><circle cx="7.5" cy="8" r="6.8" fill="url(#gGrey)" stroke="#202020" stroke-width="1.2"/><path d="M7.5,8 L12,3.5" stroke="#0a3a90" stroke-width="1"/><rect x="6.0" y="6.5" width="3" height="3" fill="#0a78e8" stroke="#0a3a90" stroke-width="0.6"/></svg>
<svg class="a" style="left:9px;top:270px" width="16" height="16" viewBox="0 0 16 16"><path d="M1.5,14 Q3,7 6,7 Q9,7 10,9 Q14,9 14.5,2" stroke="#404040" stroke-width="1.2" fill="none"/><rect x="-0.10000000000000009" y="12.5" width="3" height="3" fill="#0a78e8" stroke="#0a3a90" stroke-width="0.6"/><rect x="13.0" y="0.5" width="3" height="3" fill="#0a78e8" stroke="#0a3a90" stroke-width="0.6"/></svg>
<svg class="a" style="left:9px;top:293px" width="16" height="16" viewBox="0 0 16 16"><ellipse cx="7.5" cy="8" rx="6.3" ry="4" fill="url(#gGrey)" stroke="#202020" stroke-width="1.2"/><rect x="-0.19999999999999996" y="6.5" width="3" height="3" fill="#0a78e8" stroke="#0a3a90" stroke-width="0.6"/><rect x="12.1" y="6.5" width="3" height="3" fill="#0a78e8" stroke="#0a3a90" stroke-width="0.6"/><rect x="6.0" y="2.5" width="3" height="3" fill="#0a78e8" stroke="#0a3a90" stroke-width="0.6"/></svg>
<svg class="a" style="left:9px;top:314px" width="16" height="16" viewBox="0 0 16 16"><ellipse cx="7.5" cy="8" rx="6.3" ry="4" fill="url(#gGrey)"/><path d="M1.3,8 Q1.3,4 7.5,4 Q13.8,4 13.8,8 Q13.8,12 7.5,12" stroke="#202020" stroke-width="1.2" fill="none"/><rect x="-0.19999999999999996" y="6.5" width="3" height="3" fill="#0a78e8" stroke="#0a3a90" stroke-width="0.6"/><rect x="6.0" y="10.5" width="3" height="3" fill="#0a78e8" stroke="#0a3a90" stroke-width="0.6"/></svg>
<svg class="a" style="left:9px;top:336.5px" width="16" height="16" viewBox="0 0 16 16"><rect x="6.0" y="6.5" width="3" height="3" fill="#0a78e8" stroke="#0a3a90" stroke-width="0.6"/></svg>
<svg class="a" style="left:9px;top:359px" width="16" height="16" viewBox="0 0 16 16"><path d="M5.5,0.5 H13 L15.5,3 V15 H5.5 Z" fill="url(#gGrey)" stroke="#90a8c0" stroke-width="0.8"/><rect x="0.5" y="4.5" width="8.5" height="5.5" fill="#f0e088" stroke="#1a3a70" stroke-width="0.8"/><circle cx="8.5" cy="11.5" r="3.2" fill="#e8d880" stroke="#1a3a70" stroke-width="0.8"/><path d="M12,15.5 L15.5,12 V15.5 Z" fill="#000"/><rect x="-0.5" y="8.5" width="3" height="3" fill="#0a78e8" stroke="#0a3a90" stroke-width="0.6"/></svg>
<svg class="a" style="left:9px;top:381px" width="16" height="16" viewBox="0 0 16 16"><rect x="1" y="2" width="9" height="5.5" fill="#f0e088" stroke="#1a3a70" stroke-width="0.8"/><circle cx="10" cy="10" r="3.6" fill="#e8d880" stroke="#1a3a70" stroke-width="0.8"/><rect x="0.0" y="6.0" width="3" height="3" fill="#0a78e8" stroke="#0a3a90" stroke-width="0.6"/></svg>
<div class="a" style="left:10.5px;top:401.5px;font-size:18px;line-height:18px;color:#111">A</div>
<svg class="a" style="left:9px;top:425px" width="16" height="16" viewBox="0 0 16 16"><rect x="0.5" y="1.5" width="15" height="14" fill="url(#gGrey)" stroke="#4a80c0" stroke-width="1"/><path d="M3,9 V3 Q3,1 4,1 Q5,1 5,3 V8" stroke="#101010" stroke-width="0.9" fill="none"/><rect x="7" y="4" width="2" height="2" fill="#107010"/><rect x="7" y="7" width="2" height="2" fill="#107010"/><rect x="10" y="7" width="2" height="2" fill="#101080"/><rect x="4" y="10" width="2" height="2" fill="#e01010"/><rect x="7" y="10" width="2" height="2" fill="#107010"/><rect x="10" y="10" width="2" height="2" fill="#101080"/><rect x="2" y="12.5" width="2" height="2" fill="#e01010"/><rect x="5" y="12.5" width="2" height="2" fill="#e01010"/><rect x="8" y="12.5" width="2" height="2" fill="#107010"/><rect x="11" y="12.5" width="2" height="2" fill="#101080"/></svg>
<svg class="a" style="left:9px;top:446.5px" width="16" height="16" viewBox="0 0 16 16"><path d="M0.8,2 V14 M2.8,2 V14" stroke="#111" stroke-width="1"/><path d="M4,14 L9.5,2 L15,14 M6,10 H13" stroke="#111" stroke-width="1.6" fill="none"/></svg>
<svg class="a" style="left:9px;top:469px" width="16" height="16" viewBox="0 0 16 16"><path d="M0,3 H16 M0,13 H16 M3.5,0 V16 M13.5,0 V16" stroke="#2a5a90" stroke-width="1.2"/><path d="M5,5 L11.5,11.5 M5,8 L8.5,11.5 M8,5 L11.5,8.5" stroke="#2a5a90" stroke-width="1.1"/><path d="M5,12 L12,5" stroke="#2a5a90" stroke-width="0.6"/></svg>
<svg class="a" style="left:613px;top:95px" width="16" height="16" viewBox="0 0 16 16"><rect x="0.5" y="0.5" width="8" height="6" fill="#fff" stroke="#4a80c0" stroke-width="0.9"/><rect x="3.5" y="3.5" width="9.5" height="9.5" fill="#5a88c0" stroke="#2a5a9a" stroke-width="0.9"/><rect x="7.5" y="9.5" width="8" height="6" fill="url(#gGrey)" stroke="#4a80c0" stroke-width="0.9"/></svg>
<svg class="a" style="left:613px;top:117px" width="16" height="16" viewBox="0 0 16 16"><rect x="0.5" y="0.5" width="8" height="6" fill="url(#gGrey)" stroke="#4a80c0" stroke-width="0.9"/><rect x="3.5" y="3.5" width="9.5" height="9.5" fill="#3a68a8" stroke="#2a5a9a" stroke-width="0.9"/><rect x="7.5" y="9.5" width="8" height="6" fill="url(#gGrey)" stroke="#4a80c0" stroke-width="0.9"/></svg>
<svg class="a" style="left:613px;top:138px" width="16" height="16" viewBox="0 0 16 16"><rect x="0.5" y="0.5" width="11" height="10" fill="#5a88c0" stroke="#2a5a9a" stroke-width="0.9"/><rect x="4.5" y="5.5" width="11" height="10" fill="url(#gGrey)" stroke="#4a80c0" stroke-width="0.9"/><path d="M4.5,5.5 H11.5 V10.5 H4.5 Z" fill="#7a9ac8" opacity="0.6"/></svg>
<svg class="a" style="left:613px;top:160.5px" width="16" height="16" viewBox="0 0 16 16"><rect x="0.5" y="0.5" width="11" height="10" fill="#5a88c0" stroke="#2a5a9a" stroke-width="0.9"/><rect x="4.5" y="5.5" width="11" height="10" fill="url(#gGrey)" stroke="#4a80c0" stroke-width="0.9"/></svg>
<svg class="a" style="left:641px;top:95px" width="16" height="16" viewBox="0 0 16 16"><path d="M0,14.5 H16" stroke="#101010" stroke-width="1"/><path d="M16.6,2.6 L13.4,-0.6 L6.2,6.6 L9.4,9.8 Z" fill="#f0c828" stroke="#3a5a90" stroke-width="0.6"/><path d="M6.2,6.6 L9.4,9.8 L8,11.2 L4.8,8 Z" fill="#48c8c8" stroke="#3a5a90" stroke-width="0.5"/><path d="M4.8,8 L8,11.2 L5.5,13.7 Q3.5,14.5 2.5,13.5 Q1.5,12.5 2.3,10.5 Z" fill="#e04848" stroke="#a03030" stroke-width="0.5"/></svg>
<svg class="a" style="left:641px;top:117px" width="16" height="16" viewBox="0 0 16 16"><circle cx="4" cy="4.5" r="3.2" fill="url(#gLens)" stroke="#202020" stroke-width="1.1"/><circle cx="9.5" cy="11" r="3.2" fill="url(#gLens)" stroke="#202020" stroke-width="1.1"/><circle cx="12" cy="12.8" r="3" fill="url(#gLens)" stroke="#202020" stroke-width="1.1"/><path d="M7,2.5 Q12,0.5 13.5,5.5" stroke="#1a3a70" stroke-width="1.4" fill="none"/><path d="M11,5 L16,5 L13.5,8.5 Z" fill="#1a3a70"/></svg>
<svg class="a" style="left:641px;top:138.5px" width="16" height="16" viewBox="0 0 16 16"><path d="M8,1.5 V14.5 M1.5,8 H14.5" stroke="#3a6aa0" stroke-width="2"/><path d="M8,0 L4.5,4 H11.5 Z M8,16 L4.5,12 H11.5 Z M0,8 L4,4.5 V11.5 Z M16,8 L12,4.5 V11.5 Z" fill="#3a6aa0"/></svg>
<svg class="a" style="left:641px;top:161px" width="16" height="16" viewBox="0 0 16 16"><path d="M4,4 A6,6 0 1 0 10,2.5" stroke="#3a6aa0" stroke-width="2" fill="none"/><path d="M2,0.5 L8,2 L3,7 Z" fill="#3a6aa0"/></svg>
<svg class="a" style="left:641px;top:183px" width="16" height="16" viewBox="0 0 16 16"><rect x="0.5" y="0.5" width="15" height="15" fill="url(#gGrey)" stroke="#4a78b0" stroke-width="1"/><rect x="0" y="7" width="9" height="9" fill="#eef2f6"/><rect x="0" y="7" width="1" height="1" fill="#000"/><rect x="2" y="7" width="1" height="1" fill="#000"/><rect x="4" y="7" width="1" height="1" fill="#000"/><rect x="6" y="7" width="1" height="1" fill="#000"/><rect x="8" y="7" width="1" height="1" fill="#000"/><rect x="0" y="9" width="1" height="1" fill="#000"/><rect x="0" y="11" width="1" height="1" fill="#000"/><rect x="0" y="13" width="1" height="1" fill="#000"/><rect x="0" y="15" width="1" height="1" fill="#000"/><rect x="8" y="9" width="1" height="1" fill="#000"/><rect x="8" y="11" width="1" height="1" fill="#000"/><rect x="8" y="13" width="1" height="1" fill="#000"/><rect x="8" y="15" width="1" height="1" fill="#000"/><rect x="2" y="15" width="1" height="1" fill="#000"/><rect x="4" y="15" width="1" height="1" fill="#000"/><rect x="6" y="15" width="1" height="1" fill="#000"/></svg>
<svg class="a" style="left:641px;top:205px" width="16" height="16" viewBox="0 0 16 16"><path d="M14.5,7.5 H12 V4.5 Q12,1.3 8.3,1.3 Q4.5,1.3 4.5,4.5 V7.3 Q0.7,7.5 0.7,10.5 Q0.7,14.5 4.5,14.5 H14.5" stroke="#101010" stroke-width="1.3" fill="#fffdf4"/><path d="M14.5,9.5 H9.8 V5.2 Q9.8,3.8 8,3.8 Q6.3,3.8 6.3,5.2 V9.5 H4.5 Q3.3,9.5 3.3,11 Q3.3,12.5 4.5,12.5 H14.5" stroke="#1070e0" stroke-width="1.3" fill="none"/></svg>
<svg class="a" style="left:641px;top:227px" width="16" height="16" viewBox="0 0 16 16"><rect x="0.5" y="0.5" width="6" height="6" fill="url(#gGrey)" stroke="#000" stroke-width="1"/><rect x="9.5" y="0.5" width="6" height="6" fill="url(#gGrey)" stroke="#000" stroke-width="1"/><rect x="0.5" y="9.5" width="6" height="6" fill="url(#gGrey)" stroke="#000" stroke-width="1"/><rect x="9.5" y="9.5" width="6" height="6" fill="url(#gGrey)" stroke="#000" stroke-width="1"/></svg>
<svg class="a" style="left:641px;top:249px" width="16" height="16" viewBox="0 0 16 16"><path d="M6.5,3 V14 H1 Z M9.5,3 V14 H15 Z" fill="url(#gGrey)" stroke="#000" stroke-width="1.1"/><path d="M8,0 V16" stroke="#1a70e0" stroke-width="1"/></svg>
<svg class="a" style="left:641px;top:271px" width="16" height="16" viewBox="0 0 16 16"><path d="M0.8,15 Q2,7 5,7 Q8,7 11,9 M11.5,8 L13.8,1.2" stroke="#202020" stroke-width="1.2" fill="none"/><path d="M10.8,8.2 L13.5,6.2 L15.8,8.5 L13,10.6 Z" fill="#3080e0"/><path d="M6.5,11.5 L9,9.6 L11,12 L8.5,14 Z" fill="#f0c020"/><path d="M11.4,13 L14,10.8 L16,13.2 L13.5,15.5 Z" fill="#d050e0"/></svg>
<svg class="a" style="left:641px;top:292.5px" width="16" height="16" viewBox="0 0 16 16"><path d="M0.5,8 V16 M9,1.5 H16" stroke="#000" stroke-width="1.4"/><path d="M0.5,1 V8 M0.5,1.5 H9" stroke="#000" stroke-width="1" stroke-dasharray="1 1"/><path d="M1,8 L9,1.5" stroke="#1a70e0" stroke-width="1.4"/></svg>
<svg class="a" style="left:641px;top:315px" width="16" height="16" viewBox="0 0 16 16"><path d="M0.5,9 V16 M9,1.5 H16" stroke="#000" stroke-width="1.4"/><path d="M0.5,1 V8 M0.5,1.5 H9" stroke="#000" stroke-width="1" stroke-dasharray="1 1"/><path d="M1,9 Q1,1.5 9,1.5" stroke="#1a70e0" stroke-width="1.6" fill="none"/></svg>
<svg class="a" style="left:641px;top:336px" width="16" height="16" viewBox="0 0 16 16"><path d="M0,8 H5" stroke="#000" stroke-width="1.2"/><path d="M3,14 L9,2" stroke="#1a70e0" stroke-width="1.2"/><path d="M8,8 H16" stroke="#1a70e0" stroke-width="1.2" stroke-dasharray="2 1"/></svg>
<svg class="a" style="left:641px;top:359.5px" width="16" height="16" viewBox="0 0 16 16"><path d="M0,8 H6" stroke="#000" stroke-width="1.2"/><path d="M7,8 H11" stroke="#1a70e0" stroke-width="1.2" stroke-dasharray="2 1"/><path d="M9,14 L15,2" stroke="#1a70e0" stroke-width="1.2"/></svg>
<svg class="a" style="left:641px;top:381px" width="16" height="16" viewBox="0 0 16 16"><path d="M1,14.5 L9,6.5" stroke="#e01010" stroke-width="3.2"/><path d="M8.5,7 L11.5,4" stroke="#101010" stroke-width="1.3"/><path d="M2,4 L5,6.5 M4.5,2.5 L5.5,7 M1.5,8.5 L5,9 M4,13 L7,11 M8,14 L8.5,10.5 M9,12 L12,12.5 M8,9 L11.5,8.5" stroke="#f8c818" stroke-width="1.3"/><circle cx="2.5" cy="5" r="0.8" fill="#e01010"/><circle cx="11" cy="11" r="0.8" fill="#202020"/><circle cx="12" cy="1" r="0.8" fill="#7090c0"/><circle cx="14" cy="3" r="0.8" fill="#7090c0"/><circle cx="10" cy="3" r="0.8" fill="#7090c0"/><circle cx="12" cy="5" r="0.8" fill="#7090c0"/></svg>
<svg class="a" style="left:641px;top:402px" width="16" height="16" viewBox="0 0 16 16"><path d="M0.5,3 V11.5 H15.5 V3" stroke="#404040" stroke-width="1.2" fill="none"/><rect x="3" y="1" width="3" height="3" fill="#0a70e0"/><rect x="10" y="1" width="3" height="3" fill="#0a70e0"/></svg>
<svg class="a" style="left:641px;top:425px" width="16" height="16" viewBox="0 0 16 16"><path d="M0,8 H16" stroke="#000" stroke-width="1.3"/><path d="M3,4 L8,8 L3,12 Z M13,4 L8,8 L13,12 Z" fill="#2a5a90"/></svg>
<svg class="a" style="left:641px;top:452px" width="16" height="16" viewBox="0 0 16 16"><path d="M0.5,0 V16 M15.5,0 V16" stroke="#000" stroke-width="1.3"/><path d="M1,4 H15" stroke="#000" stroke-width="1.1"/><path d="M1,4 L5,2 V6 Z M15,4 L11,2 V6 Z" fill="#000"/></svg>
<svg class="a" style="left:641px;top:475px" width="16" height="16" viewBox="0 0 16 16"><path d="M0,4 L4,0 M12,16 L16,12" stroke="#000" stroke-width="1.3"/><path d="M3,3 L13,13" stroke="#000" stroke-width="1.1"/><path d="M2,2 L6.5,3.5 L3.5,6.5 Z M14,14 L9.5,12.5 L12.5,9.5 Z" fill="#000"/></svg>
<svg class="a" style="left:641px;top:496.5px" width="16" height="16" viewBox="0 0 16 16"><circle cx="8" cy="8" r="7.2" fill="none" stroke="#505050" stroke-width="1.1"/><path d="M8,8 L4,4" stroke="#000" stroke-width="1.1"/><path d="M3,3 L7.5,4 L4,7.5 Z" fill="#000"/></svg>
<svg class="a" style="left:641px;top:519px" width="16" height="16" viewBox="0 0 16 16"><circle cx="8" cy="8" r="7.2" fill="none" stroke="#505050" stroke-width="1.1"/><path d="M3,3 L13,13" stroke="#000" stroke-width="1.1"/><path d="M2.5,2.5 L7,3.5 L3.5,7 Z M13.5,13.5 L9,12.5 L12.5,9 Z" fill="#000"/></svg>
<svg class="a" style="left:641px;top:541px" width="16" height="16" viewBox="0 0 16 16"><path d="M0,15 H16" stroke="#000" stroke-width="1.3"/><path d="M0.5,10 L9,1.5" stroke="#000" stroke-width="1.3"/><path d="M6,5 Q12,7 12,13" stroke="#000" stroke-width="1" fill="none"/><path d="M10,11 L14,11 L12,14 Z M5,3 L8.5,4 L5.5,7 Z" fill="#000"/></svg>
<svg class="a" style="left:641px;top:568px" width="16" height="16" viewBox="0 0 16 16"><path d="M1,15 L5,1 M10,15 L14,1" stroke="#000" stroke-width="1.1"/><path d="M3,8 H12" stroke="#000" stroke-width="1.1"/><path d="M3,8 L6,6 V10 Z M12,8 L9,6 V10 Z" fill="#000"/></svg>
<div class="a" style="left:0;top:2px;width:2px;height:1px;background:#000"></div><div class="a" style="left:0;top:48px;width:2px;height:5px;background:#222"></div><div class="a" style="left:0;top:86px;width:2px;height:4px;background:#111"></div><div class="a" style="left:0;top:93px;width:2px;height:3px;background:#111"></div><div class="a" style="left:0;top:98px;width:2px;height:2px;background:#111"></div><div class="a" style="left:0;top:102px;width:2px;height:5px;background:#111"></div>
<div class="a" style="left:3px;top:3px;width:820px;height:713px;border-left:1px solid #6a6a6a;border-top:1px solid #6a6a6a;border-right:1px solid #6a6a6a;border-bottom:1px solid #6a6a6a"></div>
</body></html>
